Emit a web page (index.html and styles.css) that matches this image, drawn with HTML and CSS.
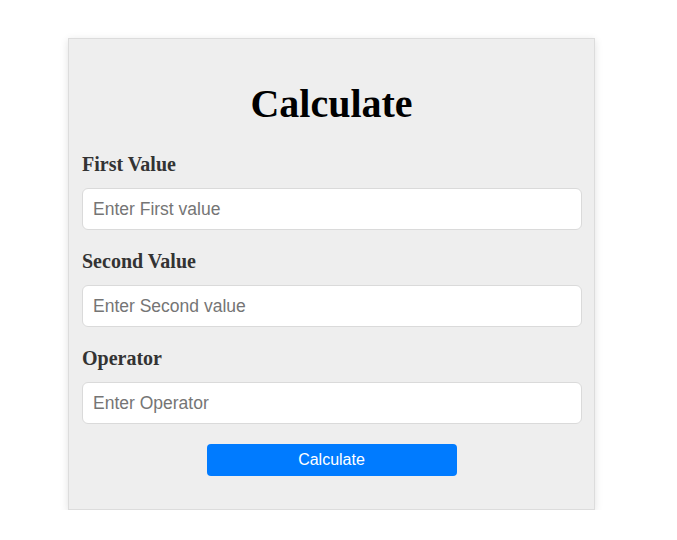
FILE: index.html
```html
<!DOCTYPE html>
<html>
<head>
<meta charset="utf-8">
<link rel="stylesheet" href="styles.css">
</head>
<body>
<div class="card">
  <h1 class="title">Calculate</h1>
  <div class="field">
    <label class="label">First Value</label>
    <input class="input" type="text" placeholder="Enter First value">
  </div>
  <div class="field">
    <label class="label">Second Value</label>
    <input class="input" type="text" placeholder="Enter Second value">
  </div>
  <div class="field">
    <label class="label">Operator</label>
    <input class="input" type="text" placeholder="Enter Operator">
  </div>
  <div class="actions">
    <button class="btn" type="button">Calculate</button>
  </div>
</div>
</body>
</html>
```
FILE: styles.css
```css
html, body {
  margin: 0;
  padding: 0;
  background: #fff;
}
body {
  font-family: "Liberation Serif", "Times New Roman", serif;
  padding-top: 38px;
  padding-left: 68px;
}
.card {
  box-sizing: border-box;
  width: 527px;
  height: 472px;
  background: #eeeeee;
  border: 1px solid #dcdcdc;
  box-shadow: 0 2px 8px rgba(0, 0, 0, 0.12);
  padding: 42px 13px 0 13px;
}
.title {
  margin: 0 0 26px 0;
  font-size: 40px;
  line-height: 46px;
  font-weight: bold;
  text-align: center;
  color: #000;
}
.field {
  display: flex;
  flex-direction: column;
  margin-bottom: 20px;
}
.label {
  font-size: 20px;
  line-height: 22px;
  font-weight: bold;
  color: #333;
  margin-bottom: 13px;
}
.input {
  box-sizing: border-box;
  width: 500px;
  height: 42px;
  border: 1px solid #dadada;
  border-radius: 6px;
  background: #fff;
  padding: 0 10px;
  font-family: "Liberation Sans", Arial, sans-serif;
  font-size: 17.5px;
  color: #333;
  outline: none;
}
.input::placeholder {
  color: #757575;
}
.actions {
  display: flex;
  justify-content: center;
}
.btn {
  width: 250px;
  height: 32px;
  border: none;
  border-radius: 4px;
  background: #007bff;
  color: #fff;
  font-family: "Liberation Sans", Arial, sans-serif;
  font-size: 16px;
  padding: 0;
}
```
